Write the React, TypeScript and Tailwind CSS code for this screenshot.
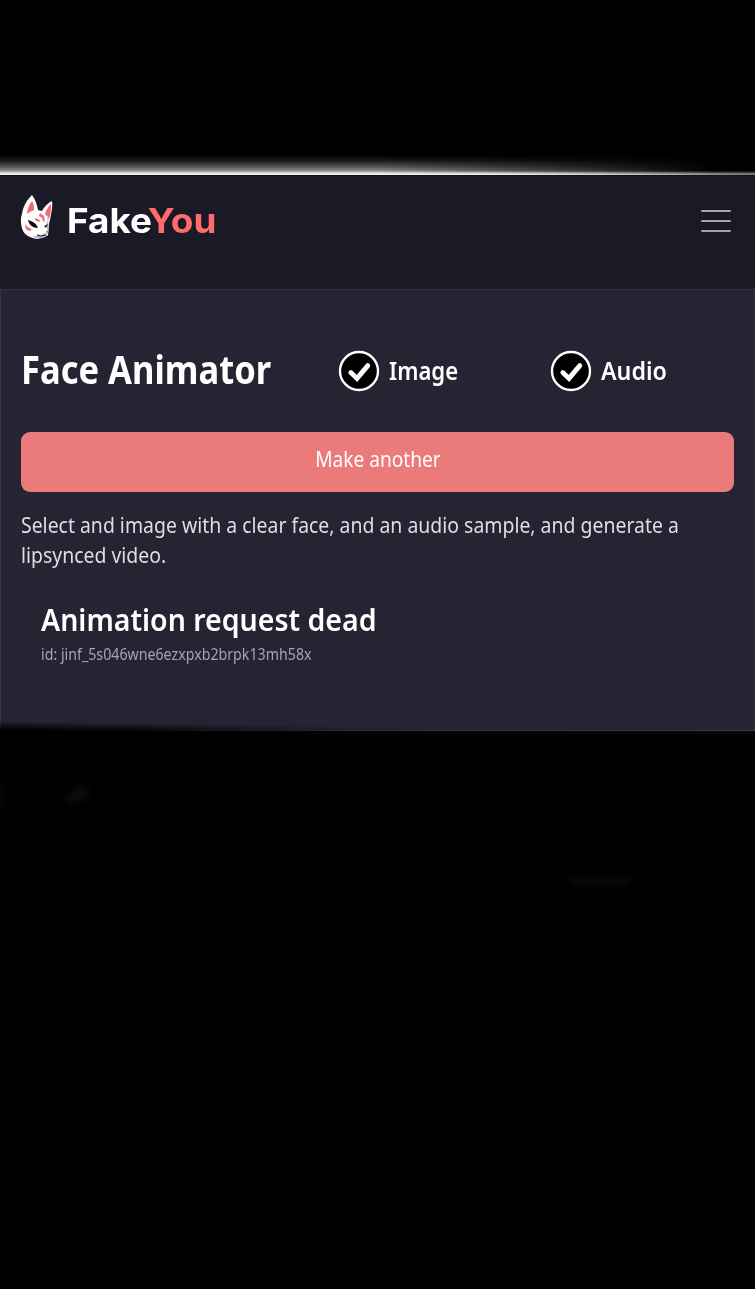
const steps = [
  { label: 'Image', scale: 'scale-x-[0.885]' },
  { label: 'Audio', scale: 'scale-x-[0.93]' }
]

function FoxLogo() {
  return (
    <svg viewBox="0 0 34 46" className="-mt-[3px] h-[46px] w-[34px] shrink-0">
      <path d="M12 1 C6 7 3 13 2 20 C0 25 1 32 3 37 C6 42 11 44 17 45 C21 44 26 43 28 41 C29 36 28 31 30 26 C31 20 33 13 32 7 C28 9 24 13 22 17 L18 16 C17 10 15 5 12 1Z" fill="#fff" />
      <path d="M30 22 C27 27 29 32 28 38 L25 43 L18 45 L12 42 L22 42 L25 34 L23 27Z" fill="#b9b7dc" />
      <path d="M24 24 L28 25 L26 31 L28 38 L24 40 L20 36Z" fill="#fff" />
      <path d="M12 7 C9 11 7 15 7 20 C9 18 12 17 14 16 C14 13 14 10 12 7Z" fill="#ee6a74" />
      <path d="M31 10 C28 13 26 16 25 20 L29 24 C31 20 31 15 31 10Z" fill="#ee6a74" />
      <path d="M20 19 L24 22 L25 28 L23 27 L22 24 L19 22Z M15 24 L20 26 L19 28 L15 26Z M5 30 C7 33 9 34 12 35 L10 37 C6 36 5 34 5 30Z M29 36 L27 40 L26 37Z" fill="#ec6b76" />
      <path d="M8 26 C12 27 16 29 18 34 C13 34 9 31 8 26Z" fill="#09090d" />
      <path d="M24 32 L28 30 L26 34Z" fill="#211e3b" />
      <path d="M17 41 L21 42 L26 41" fill="none" stroke="#17151f" strokeWidth="1.1" />
    </svg>
  )
}

function StepCheck() {
  return (
    <svg viewBox="0 0 42 42" className="h-[42px] w-[42px] shrink-0">
      <circle cx="21" cy="21" r="19" fill="#000" stroke="#fff" strokeWidth="2.4" />
      <path d="M12.8 22.6 L19 28.4 L29.8 15.6" fill="none" stroke="#fff" strokeWidth="4.8" strokeLinecap="round" strokeLinejoin="miter" />
    </svg>
  )
}

export default function App() {
  return (
    <div className="relative flex h-[1289px] w-[755px] flex-col overflow-hidden bg-black font-['Noto_Sans',sans-serif] text-white">
      <div className="relative h-[175px] shrink-0">
        <div className="absolute bottom-0 left-0 h-[20px] w-full bg-[linear-gradient(to_bottom,transparent,#161616_25%,#4c4c4c_55%,#888_78%,#d8d8d8_100%)] [mask-image:linear-gradient(to_right,#000_50%,transparent_95%)]" />
        <div className="absolute bottom-0 left-0 h-[4px] w-full bg-[linear-gradient(to_bottom,transparent,#f0f0f4_80%)] [mask-image:linear-gradient(to_right,#000_65%,#0008_100%)]" />
      </div>

      <header className="flex h-[114px] shrink-0 items-start justify-between border-t border-[#111018] bg-[#1a1a27] pr-[24px] pl-5">
        <div className="mt-[16px] flex items-center">
          <FoxLogo />
          <span className="mt-[6px] ml-[13px] origin-left scale-x-[1.085] text-[34px] leading-[46px] font-bold whitespace-nowrap font-['Inter',sans-serif]">
            Fake<span className="text-[#ff6b6b]">You</span>
          </span>
        </div>
        <div className="mt-[34px] flex w-[30px] flex-col gap-[8px]">
          <span className="h-[2px] rounded-full bg-[#a3a3ae]" />
          <span className="h-[2px] rounded-full bg-[#a3a3ae]" />
          <span className="h-[2px] rounded-full bg-[#a3a3ae]" />
        </div>
      </header>

      <main className="relative h-[442px] shrink-0 border border-[#353442] bg-[#242433] px-5">
        <div className="mt-[60px] flex h-[42px] items-center">
          <h1 className="mt-[-4px] w-[316.5px] shrink-0 text-[39px] leading-[42px] font-bold whitespace-nowrap">
            <span className="inline-block origin-left scale-x-[0.886]">Face Animator</span>
          </h1>
          {steps.map((step) => (
            <div key={step.label} className="flex w-[212.5px] shrink-0 items-center gap-[9px]">
              <StepCheck />
              <span className={`mt-[-3px] origin-left text-[25px] leading-[42px] font-semibold whitespace-nowrap ${step.scale}`}>
                {step.label}
              </span>
            </div>
          ))}
        </div>

        <button className="mt-[40px] flex h-[60px] w-full items-center justify-center rounded-[9px] bg-[#eb7a7a] pb-[4px] text-[21px]">
          <span className="scale-x-[0.91]">Make another</span>
        </button>

        <p className="mt-[18px] w-full origin-left scale-x-[0.925] text-[21px] leading-[30px] whitespace-nowrap text-[#dedee4]">
          Select and image with a clear face, and an audio sample, and generate a
          <br />
          lipsynced video.
        </p>

        <div className="mt-[32px] flex flex-col items-start pl-5">
          <h2 className="origin-left scale-x-[0.95] text-[30px] leading-[36px] font-semibold whitespace-nowrap">Animation request dead</h2>
          <span className="mt-[4px] origin-left scale-x-[0.888] text-[16px] leading-[24px] whitespace-nowrap text-[#a5a5ae]">
            id: jinf_5s046wne6ezxpxb2brpk13mh58x
          </span>
        </div>

        <div className="absolute -bottom-px -left-px h-[9px] w-[755px] bg-[linear-gradient(180.8deg,transparent_50%,#000_95%)] [mask-image:linear-gradient(to_right,#000_20%,transparent_60%)]" />
      </main>

      {/* faint smudges on the backdrop */}
      <div className="relative flex-1">
        <div className="absolute top-0 right-0 h-[10px] w-[520px] bg-gradient-to-b from-[#0b0b12] to-black [mask-image:linear-gradient(to_right,transparent,#000)]" />
        <div className="absolute top-[61px] left-[66px] h-[7px] w-[22px] -rotate-30 rounded-full bg-[#15151f] blur-[4px]" />
        <div className="absolute top-[54px] -left-[7px] h-[20px] w-[9px] rounded-full bg-[#0c0c10] blur-[4px]" />
        <div className="absolute top-[148px] left-[570px] h-[4px] w-[60px] rounded-full bg-[#101018] blur-[3px]" />
      </div>
    </div>
  )
}
